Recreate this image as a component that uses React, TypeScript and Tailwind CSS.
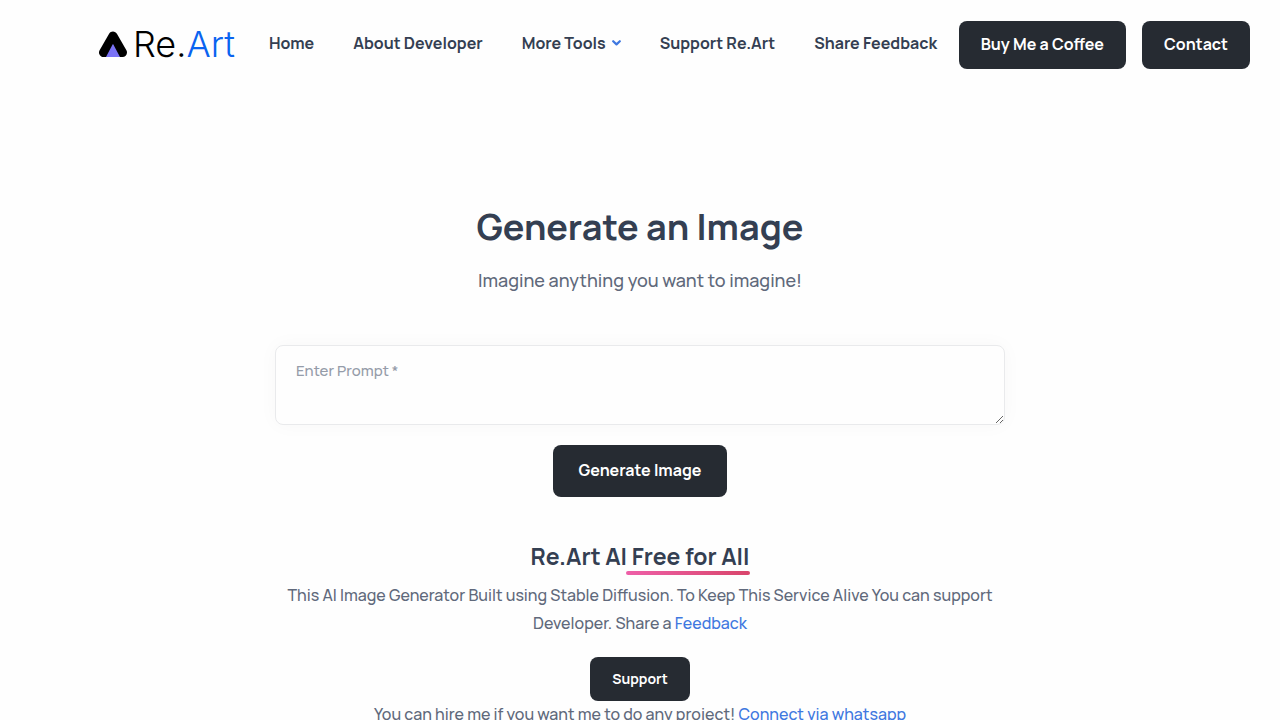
const navLink = "whitespace-nowrap text-base font-bold text-[#343f52] hover:text-[#3f78e0]";
const darkButton =
  "inline-flex items-center justify-center whitespace-nowrap rounded-lg bg-[#262b32] font-bold text-white hover:bg-[#343f52]";

function Logo() {
  return (
    <a href="#home" aria-label="Re.Art" className="flex shrink-0 items-center gap-1.5 pt-0.5">
      <svg width="28" height="26" viewBox="0 0 28 26" aria-hidden="true">
        <path d="M14 5 4.5 21.5H23.5Z" fill="#000" stroke="#000" strokeWidth="9" strokeLinejoin="round" />
        <path d="M14.2 13.2Q14 12.8 13.6 13.4L7 26H21Z" fill="#7a72f5" />
      </svg>
      <span className="font-['Inter',sans-serif] text-4xl leading-9 font-light text-black">
        Re.<span className="text-[#0a63f0]">Art</span>
      </span>
    </a>
  );
}

function Header() {
  return (
    <header className="flex items-start justify-between pt-[21px] pr-[30px] pl-[99px]">
      <div className="flex items-center gap-[34px] pt-[3px]">
        <Logo />
        <nav aria-label="Main" className="flex items-center gap-[39px]">
          <a href="#home" className={navLink}>Home</a>
          <a href="#about" className={navLink}>About Developer</a>
          <a href="#tools" className={`${navLink} flex items-center gap-1.5`}>
            More Tools
            <svg width="9" height="6" viewBox="0 0 9 6" fill="none" aria-hidden="true">
              <path d="M1.2 1.2 4.5 4.4 7.8 1.2" stroke="#3f78e0" strokeWidth="2.2" strokeLinecap="round" strokeLinejoin="round" />
            </svg>
          </a>
          <a href="#support" className={navLink}>Support Re.Art</a>
          <a href="#feedback" className={navLink}>Share Feedback</a>
        </nav>
      </div>
      <div className="flex gap-4">
        <a href="#coffee" className={`${darkButton} h-12 px-[22px] pb-0.5 text-base`}>Buy Me a Coffee</a>
        <a href="#contact" className={`${darkButton} h-12 px-[22px] pb-0.5 text-base`}>Contact</a>
      </div>
    </header>
  );
}

export default function App() {
  return (
    <div className="min-h-screen bg-[#fefefe] font-['Manrope','Inter',sans-serif] font-medium text-[#60697b]">
      <Header />
      <main className="mx-auto flex max-w-[730px] flex-col items-center pt-[132px] text-center">
        <h1 className="text-4xl leading-[52px] font-bold text-[#343f52]">Generate an Image</h1>
        <p className="mt-3 text-lg leading-[30px]">Imagine anything you want to imagine!</p>
        <form className="mt-[50px] flex w-full flex-col items-center" onSubmit={(e) => e.preventDefault()}>
          <textarea
            aria-label="Enter Prompt"
            placeholder="Enter Prompt *"
            className="block h-20 w-full rounded-lg border border-[#e9eaec] bg-[#fefefe] px-5 py-3 text-[15px] leading-[26px] shadow-[0_0_20px_rgba(30,34,40,0.03)] outline-none placeholder:text-[#959ca9]"
          />
          <button type="submit" className={`${darkButton} mt-5 h-[52px] px-[26px] pb-0.5 text-base`}>
            Generate Image
          </button>
        </form>
        <h2 className="mt-11 text-[23px] leading-[30px] font-bold text-[#343f52]">
          Re.Art AI{" "}
          <span className="relative">
            Free for All
            <span className="absolute right-0 -bottom-[3px] -left-1.5 h-1 rounded-full bg-linear-to-r from-[#ee5fa8] to-[#d9456b]" />
          </span>
        </h2>
        <p className="mt-2.5 text-base leading-7">
          This AI Image Generator Built using Stable Diffusion. To Keep This Service Alive You can support
          Developer. Share a <a href="#feedback" className="text-[#3f78e0]">Feedback</a>
        </p>
        <a href="#support" className={`${darkButton} mt-5 h-11 px-[22px] text-sm`}>Support</a>
        <p className="text-base leading-[26px]">
          You can hire me if you want me to do any project! <a href="#whatsapp" className="text-[#3f78e0]">Connect via whatsapp</a>
        </p>
      </main>
    </div>
  );
}
